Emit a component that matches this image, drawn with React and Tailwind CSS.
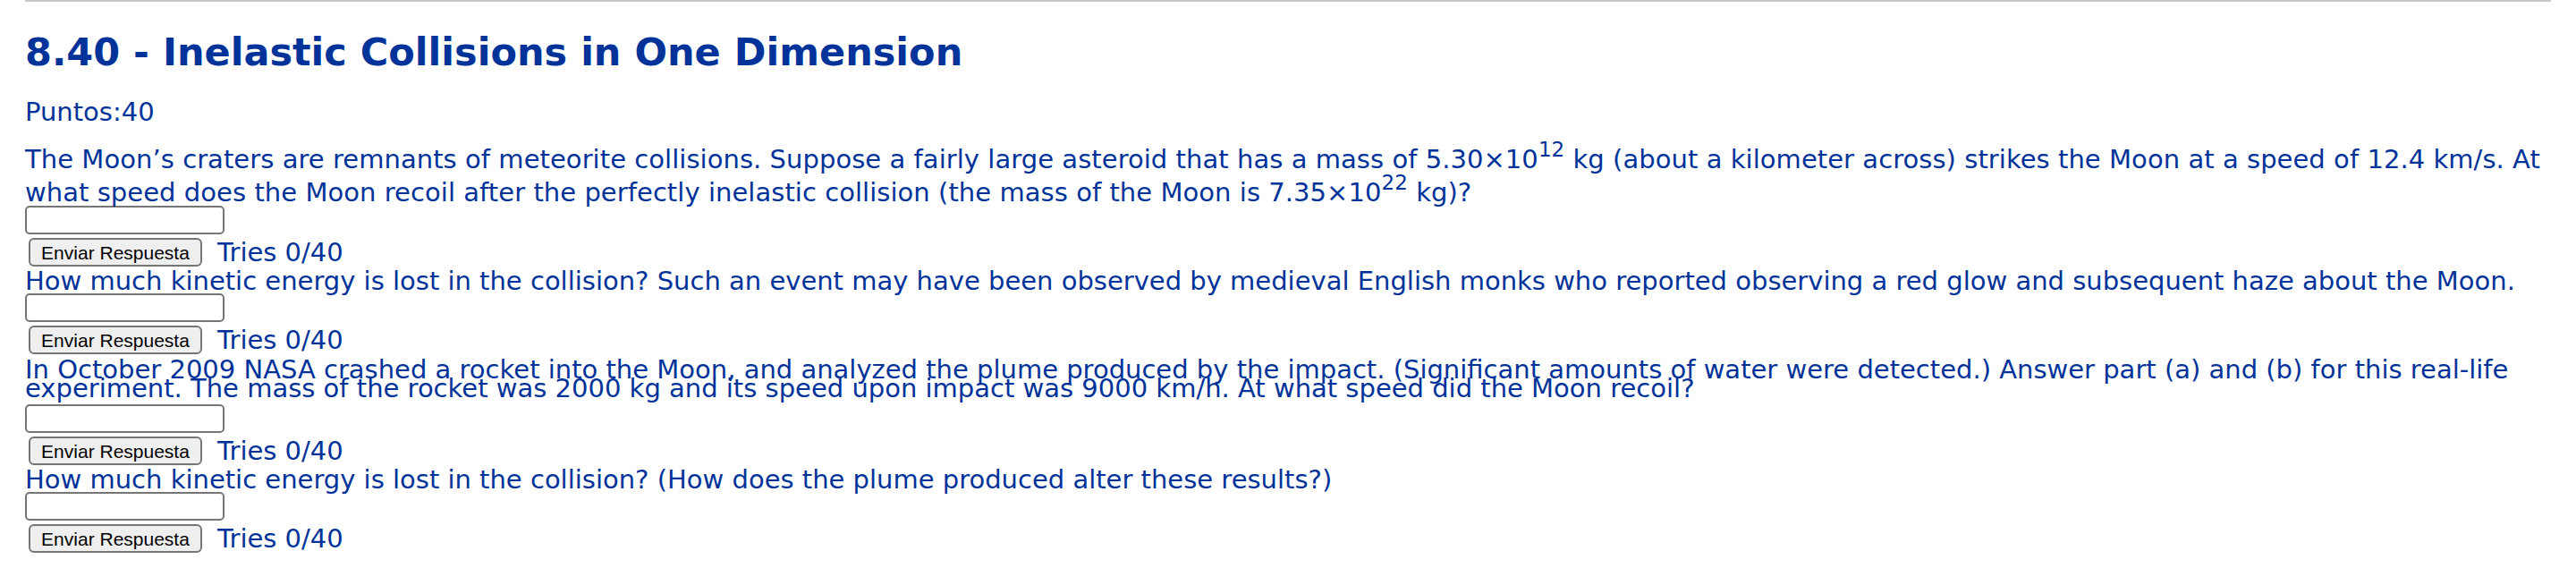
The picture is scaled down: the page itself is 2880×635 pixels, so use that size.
import React from "react";

const blue = "text-[#003399]";

const Sup = ({ children }) => (
  <sup className="text-[23px] leading-none align-baseline relative -top-[13px]">
    {children}
  </sup>
);

const AnswerRow = () => (
  <>
    <input
      type="text"
      className="block w-[223px] h-[32px] bg-white border-2 border-[#767676] rounded-[5px] outline-none"
    />
    <div className="flex items-center mt-[4px] h-[32px]">
      <button className="ml-[4px] w-[194px] h-[32px] bg-[#efefef] border-2 border-[#767676] rounded-[6px] text-black text-[21px] leading-none font-['Liberation_Sans',Arial,sans-serif]">
        Enviar Respuesta
      </button>
      <span className={`ml-[17px] text-[29px] leading-[28px] ${blue}`}>
        Tries 0/40
      </span>
    </div>
  </>
);

export default function App() {
  return (
    <div className="bg-white min-h-screen px-[28px] font-['DejaVu_Sans','Verdana',sans-serif]">
      <div className="h-[2px] bg-[#c6c6c6]" />

      <h1 className={`mt-[35px] text-[43px] leading-[43px] font-bold ${blue}`}>
        8.40 - Inelastic Collisions in One Dimension
      </h1>

      <div className={`mt-[31px] text-[29px] leading-[28px] ${blue}`}>Puntos:40</div>

      {/* part a */}
      <p className={`mt-[21px] -mb-[4px] text-[29px] leading-[37px] tracking-[0.05px] whitespace-nowrap ${blue}`}>
        The Moon’s craters are remnants of meteorite collisions. Suppose a fairly large asteroid
        that has a mass of 5.30×10<Sup>12</Sup> kg (about a kilometer across) strikes the Moon at
        a speed of 12.4 km/s. At
        <br />
        what speed does the Moon recoil after the perfectly inelastic collision (the mass of the
        Moon is 7.35×10<Sup>22</Sup> kg)?
      </p>
      <AnswerRow />

      {/* part b */}
      <p className={`mt-[2px] text-[29px] leading-[28px] whitespace-nowrap ${blue}`}>
        How much kinetic energy is lost in the collision? Such an event may have been observed by
        medieval English monks who reported observing a red glow and subsequent haze about the
        Moon.
      </p>
      <AnswerRow />

      {/* part c */}
      <p className={`mt-[7px] mb-[7px] text-[29px] leading-[21px] whitespace-nowrap ${blue}`}>
        In October 2009 NASA crashed a rocket into the Moon, and analyzed the plume produced by the
        impact. (Significant amounts of water were detected.) Answer part (a) and (b) for this
        real-life
        <br />
        experiment. The mass of the rocket was 2000 kg and its speed upon impact was 9000 km/h. At
        what speed did the Moon recoil?
      </p>
      <AnswerRow />

      {/* part d */}
      <p className={`mt-[2px] text-[29px] leading-[28px] whitespace-nowrap ${blue}`}>
        How much kinetic energy is lost in the collision? (How does the plume produced alter these
        results?)
      </p>
      <AnswerRow />
    </div>
  );
}
